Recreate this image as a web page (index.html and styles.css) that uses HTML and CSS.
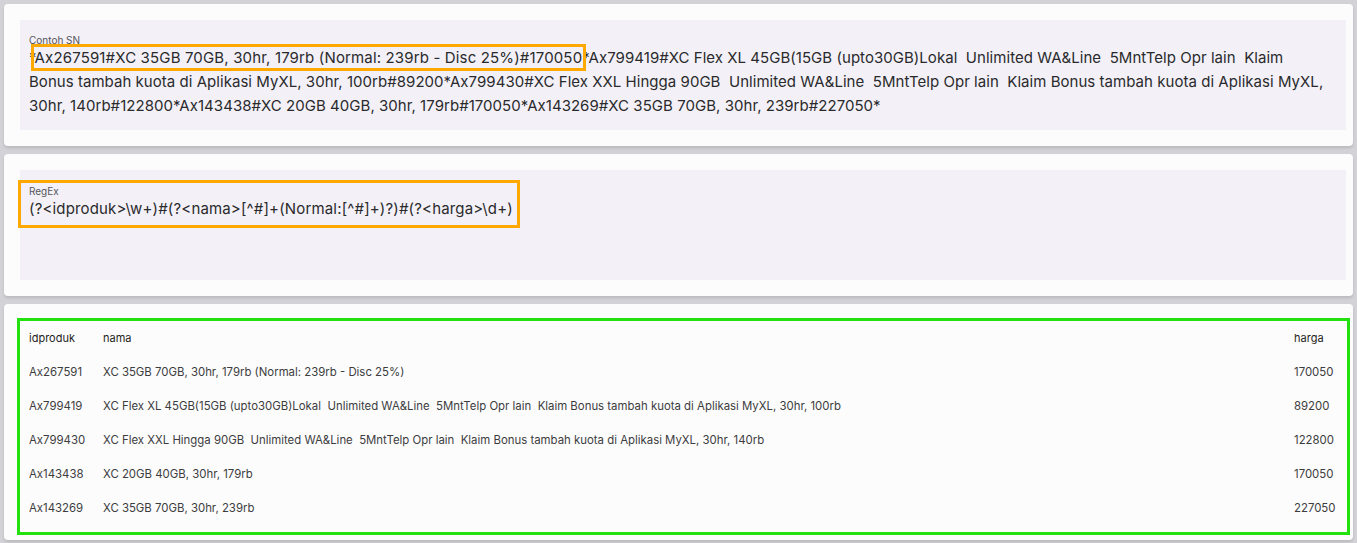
FILE: index.html
```html
<!DOCTYPE html>
<html lang="id">
<head>
    <meta charset="UTF-8">
    <meta name="viewport" content="width=device-width, initial-scale=1.0">
    <title>Parser SN</title>
    <link rel="stylesheet" href="styles.css">
</head>
<body>
    <div class="card card-sn">
        <div class="field">
            <label class="field-label">Contoh SN</label>
            <div class="field-text">*<span class="match">Ax267591#XC 35GB 70GB, 30hr, 179rb (Normal: 239rb - Disc 25%)#170050</span>*Ax799419#XC Flex XL 45GB(15GB (upto30GB)Lokal&nbsp; Unlimited WA&amp;Line&nbsp; 5MntTelp Opr lain&nbsp; Klaim Bonus tambah kuota di Aplikasi MyXL, 30hr, 100rb#89200*Ax799430#XC Flex XXL Hingga 90GB&nbsp; Unlimited WA&amp;Line&nbsp; 5MntTelp Opr lain&nbsp; Klaim Bonus tambah kuota di Aplikasi MyXL, 30hr, 140rb#122800*Ax143438#XC 20GB 40GB, 30hr, 179rb#170050*Ax143269#XC 35GB 70GB, 30hr, 239rb#227050*</div>
        </div>
    </div>

    <div class="card card-regex">
        <div class="field">
            <div class="regex-box">
                <label class="field-label">RegEx</label>
                <div class="field-text">(?&lt;idproduk&gt;\w+)#(?&lt;nama&gt;[^#]+(Normal:[^#]+)?)#(?&lt;harga&gt;\d+)</div>
            </div>
        </div>
    </div>

    <div class="card card-result">
        <div class="result-box">
            <div class="result-table">
                <div class="cell head">idproduk</div>
                <div class="cell head">nama</div>
                <div class="cell head">harga</div>

                <div class="cell">Ax267591</div>
                <div class="cell">XC 35GB 70GB, 30hr, 179rb (Normal: 239rb - Disc 25%)</div>
                <div class="cell">170050</div>

                <div class="cell">Ax799419</div>
                <div class="cell">XC Flex XL 45GB(15GB (upto30GB)Lokal&nbsp; Unlimited WA&amp;Line&nbsp; 5MntTelp Opr lain&nbsp; Klaim Bonus tambah kuota di Aplikasi MyXL, 30hr, 100rb</div>
                <div class="cell">89200</div>

                <div class="cell">Ax799430</div>
                <div class="cell">XC Flex XXL Hingga 90GB&nbsp; Unlimited WA&amp;Line&nbsp; 5MntTelp Opr lain&nbsp; Klaim Bonus tambah kuota di Aplikasi MyXL, 30hr, 140rb</div>
                <div class="cell">122800</div>

                <div class="cell">Ax143438</div>
                <div class="cell">XC 20GB 40GB, 30hr, 179rb</div>
                <div class="cell">170050</div>

                <div class="cell">Ax143269</div>
                <div class="cell">XC 35GB 70GB, 30hr, 239rb</div>
                <div class="cell">227050</div>
            </div>
        </div>
    </div>
</body>
</html>
```

FILE: styles.css
```css
/* Global */
* {
    box-sizing: border-box;
    margin: 0;
    padding: 0;
}

body {
    background-color: #d3d2d7;
    font-family: Inter, "Noto Sans", sans-serif;
    color: #2a2a2c;
    padding: 4px 4px 0 4px;
}

/* Cards */
.card {
    background-color: #fcfcfd;
    border-radius: 4px;
    box-shadow: 0 2px 3px rgba(0, 0, 0, 0.12);
    margin-bottom: 8px;
}

.card-sn,
.card-regex {
    height: 142px;
    padding: 16px 7px 16px 16px;
}

/* Input fields */
.field {
    background-color: #f3f1f7;
    height: 110px;
    padding: 14px 14px 0 9px;
}

.field-label {
    display: block;
    font-size: 10px;
    line-height: 12px;
    color: #55555a;
}

.field-text {
    font-size: 15px;
    line-height: 24px;
    letter-spacing: 0.04px;
}

.match {
    margin-left: -2px;
    letter-spacing: 0.15px;
    outline: 3px solid #ffa800;
    outline-offset: 1px;
}

/* RegEx field */
.card-regex .field {
    padding: 10px 0 0 0;
}

.regex-box {
    width: 502px;
    margin-left: -2px;
    border: 3px solid #ffa800;
    padding: 2px 0 4px 8px;
}

.regex-box .field-text {
    letter-spacing: 0.16px;
}

/* Result table */
.card-result {
    height: 236px;
    padding: 14px 3px 0 13px;
}

.result-box {
    border: 3px solid #22e10e;
    height: 217px;
    padding: 0 10px 0 9px;
}

.result-table {
    display: grid;
    grid-template-columns: 74px 1fr 43px;
    font-size: 11.4px;
    color: #3d3d40;
}

.cell {
    height: 34px;
    line-height: 34px;
    white-space: nowrap;
}

.cell.head {
    font-size: 11px;
    color: #1f1f21;
}
```
